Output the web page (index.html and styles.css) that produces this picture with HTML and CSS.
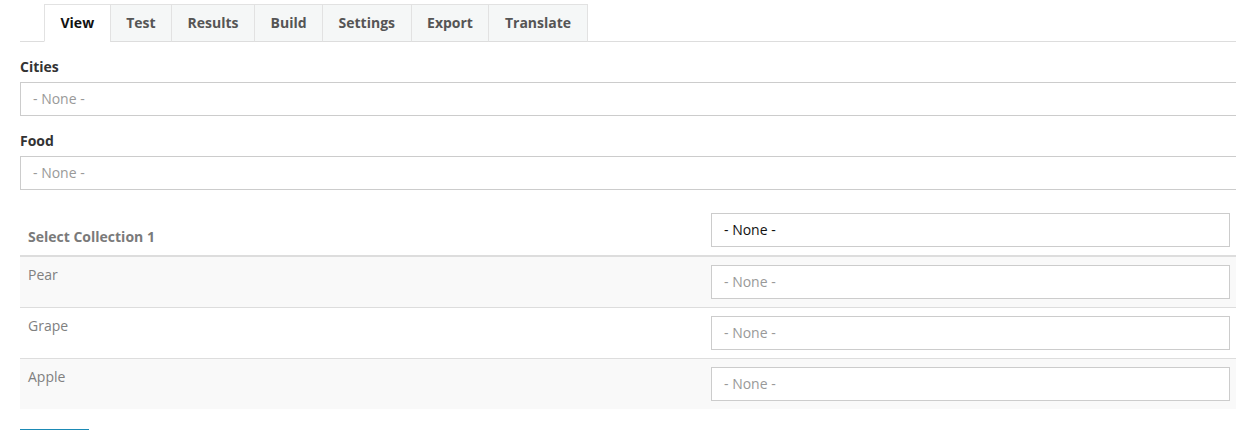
FILE: index.html
```html
<!DOCTYPE html>
<html>
<head>
<meta charset="utf-8">
<link rel="stylesheet" href="styles.css">
</head>
<body>
<div class="page">
  <ul class="tabs">
    <li class="tab active">View</li>
    <li class="tab">Test</li>
    <li class="tab">Results</li>
    <li class="tab">Build</li>
    <li class="tab">Settings</li>
    <li class="tab">Export</li>
    <li class="tab">Translate</li>
  </ul>
  <div class="form-group">
    <label class="label">Cities</label>
    <div class="select">- None -</div>
  </div>
  <div class="form-group">
    <label class="label">Food</label>
    <div class="select">- None -</div>
  </div>
  <table class="grid">
    <thead>
      <tr>
        <th class="col-name">Select Collection 1</th>
        <th class="col-input"><div class="select select-dark">- None -</div></th>
      </tr>
    </thead>
    <tbody>
      <tr class="odd"><td>Pear</td><td><div class="select">- None -</div></td></tr>
      <tr><td>Grape</td><td><div class="select">- None -</div></td></tr>
      <tr class="odd"><td>Apple</td><td><div class="select">- None -</div></td></tr>
    </tbody>
  </table>
  <button class="btn" aria-label="Submit"></button>
</div>
</body>
</html>
```

FILE: styles.css
```css
html, body {
  margin: 0;
  padding: 0;
  background: #fff;
  overflow: hidden;
}
body {
  font-family: "Open Sans", "Liberation Sans", sans-serif;
  font-size: 14px;
  line-height: 20px;
  color: #333;
}
.page {
  padding-left: 20px;
  width: 1230px;
}
.tabs {
  list-style: none;
  margin: 4px 0 0 0;
  padding: 0 0 0 24px;
  display: flex;
  border-bottom: 1px solid #dddddd;
  height: 37px;
}
.tab {
  box-sizing: border-box;
  height: 38px;
  padding: 8px 15.5px;
  border: 1px solid #e2e2e2;
  border-bottom-color: #dddddd;
  background: #f5f7f7;
  color: #555;
  font-weight: 700;
  margin-right: -1px;
}
.tab.active {
  background: #fff;
  color: #111;
  border-bottom-color: #fff;
}
.form-group {
  margin-top: 15px;
}
.label {
  display: block;
  font-weight: 700;
  margin-bottom: 5px;
  color: #333;
}
.select {
  box-sizing: border-box;
  height: 34px;
  padding: 6px 12px;
  border: 1px solid #cccccc;
  background: #fff;
  color: #999;
}
.select-dark {
  color: #111;
  font-weight: 400;
}
.grid {
  margin-top: 15px;
  width: 1218px;
  border-collapse: collapse;
  table-layout: fixed;
}
.col-name {
  width: 683px;
}
.grid th {
  box-sizing: border-box;
  text-align: left;
  vertical-align: bottom;
  padding: 8px;
  border-bottom: 2px solid #dddddd;
  color: #7a7a7a;
  font-weight: 700;
}
.grid td {
  padding: 8px;
  vertical-align: top;
  border-top: 1px solid #dddddd;
  color: #808080;
}
.grid tr.odd td {
  background: #f9f9f9;
}
.btn {
  display: block;
  margin-top: 20px;
  width: 69px;
  height: 34px;
  border: 1px solid #1b8ab5;
  background: #1f97c6;
}
```
